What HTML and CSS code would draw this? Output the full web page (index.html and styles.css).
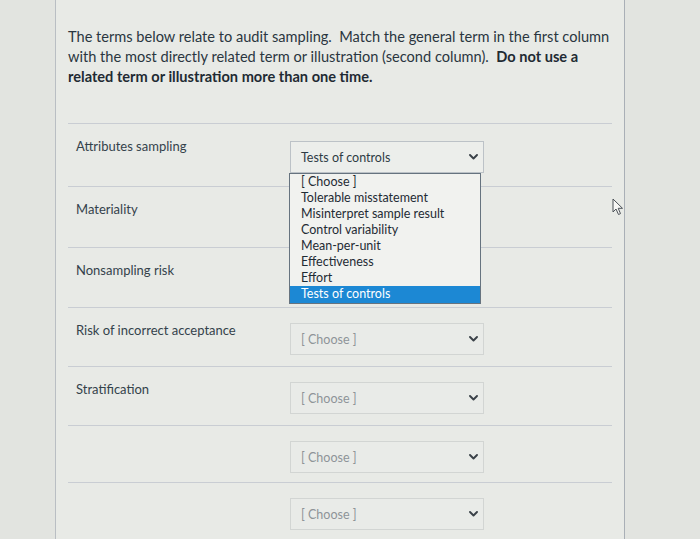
FILE: index.html
```html
<!DOCTYPE html>
<html>
<head>
<meta charset="utf-8">
<link rel="stylesheet" href="styles.css">
</head>
<body>
<div class="card">
  <p class="intro">The terms below relate to audit sampling.&nbsp; Match the general term in the first column with the most directly related term or illustration (second column).&nbsp; <b>Do not use a related term or illustration more than one time.</b></p>
  <div class="rows">
    <div class="row">
      <div class="label">Attributes sampling</div>
      <div class="field">
        <div class="select filled"><span>Tests of controls</span><svg class="chev" viewBox="0 0 9 6" width="9" height="6"><path d="M1 1 L4.5 4.5 L8 1" /></svg></div>
        <ul class="listbox">
          <li>[ Choose ]</li>
          <li>Tolerable misstatement</li>
          <li>Misinterpret sample result</li>
          <li>Control variability</li>
          <li>Mean-per-unit</li>
          <li>Effectiveness</li>
          <li>Effort</li>
          <li class="sel">Tests of controls</li>
        </ul>
      </div>
    </div>
    <div class="row">
      <div class="label">Materiality</div>
      <div class="field"><div class="select covered"><span>[ Choose ]</span><svg class="chev" viewBox="0 0 9 6" width="9" height="6"><path d="M1 1 L4.5 4.5 L8 1" /></svg></div></div>
    </div>
    <div class="row">
      <div class="label">Nonsampling risk</div>
      <div class="field"><div class="select covered"><span>[ Choose ]</span><svg class="chev" viewBox="0 0 9 6" width="9" height="6"><path d="M1 1 L4.5 4.5 L8 1" /></svg></div></div>
    </div>
    <div class="row">
      <div class="label">Risk of incorrect acceptance</div>
      <div class="field"><div class="select"><span>[ Choose ]</span><svg class="chev" viewBox="0 0 9 6" width="9" height="6"><path d="M1 1 L4.5 4.5 L8 1" /></svg></div></div>
    </div>
    <div class="row">
      <div class="label">Stratification</div>
      <div class="field"><div class="select"><span>[ Choose ]</span><svg class="chev" viewBox="0 0 9 6" width="9" height="6"><path d="M1 1 L4.5 4.5 L8 1" /></svg></div></div>
    </div>
    <div class="row">
      <div class="label"></div>
      <div class="field"><div class="select"><span>[ Choose ]</span><svg class="chev" viewBox="0 0 9 6" width="9" height="6"><path d="M1 1 L4.5 4.5 L8 1" /></svg></div></div>
    </div>
    <div class="row">
      <div class="label"></div>
      <div class="field"><div class="select"><span>[ Choose ]</span><svg class="chev" viewBox="0 0 9 6" width="9" height="6"><path d="M1 1 L4.5 4.5 L8 1" /></svg></div></div>
    </div>
  </div>
  <svg class="cursor" viewBox="0 0 12 18" width="12" height="18"><path d="M1 1 L1 14 L4 11 L6.5 16.5 L8.5 15.6 L6.2 10.3 L10.5 10.3 Z" /></svg>
</div>
</body>
</html>
```
FILE: styles.css
```css
html, body {
  margin: 0;
  padding: 0;
  background: #e2e4e0;
}
body {
  font-family: Lato, "Open Sans", sans-serif;
  color: #2b3942;
  width: 700px;
  height: 539px;
  overflow: hidden;
}
.card {
  position: relative;
  margin-left: 55px;
  width: 570px;
  height: 539px;
  box-sizing: border-box;
  border-left: 1px solid #b9bec3;
  border-right: 1px solid #a9afb6;
  background: #e8eae6;
  padding: 27px 12px 0 12px;
}
.intro {
  margin: 0;
  font-size: 14.6px;
  line-height: 20px;
  width: 548px;
  color: #2a3640;
}
.intro b {
  font-weight: 700;
  color: #1f2a33;
}
.rows {
  margin-top: 36px;
}
.row {
  display: flex;
  height: 58px;
  border-top: 1px solid #c9cdd3;
}
.row:nth-child(1) { height: 62px; }
.row:nth-child(2) { height: 60px; }
.row:nth-child(3) { height: 59px; }
.row:nth-child(6) { height: 56px; }
.label {
  width: 214px;
  padding: 14px 0 0 8px;
  font-size: 13px;
  line-height: 17px;
  color: #34424b;
}
.field {
  position: relative;
  padding-top: 15px;
}
.row:nth-child(1) .field {
  padding-top: 17px;
}
.select {
  width: 194px;
  height: 32px;
  box-sizing: border-box;
  border: 1px solid #d2d5d3;
  background: #e9ebe8;
  display: flex;
  align-items: center;
  justify-content: space-between;
  padding: 0 5px 0 10px;
  font-size: 12.5px;
  color: #8e9498;
}
.select.filled {
  border-color: #bcc2c7;
  background: #eceeeb;
  color: #2e3b44;
}
.select.covered {
  visibility: hidden;
}
.chev path {
  fill: none;
  stroke: #3a4148;
  stroke-width: 1.9;
  stroke-linecap: round;
  stroke-linejoin: round;
}
.listbox {
  position: absolute;
  z-index: 2;
  left: -1px;
  top: 49px;
  width: 190px;
  margin: 0;
  padding: 0;
  list-style: none;
  border: 1px solid #66737f;
  background: #f1f2ef;
  font-size: 12.5px;
  line-height: 16px;
  color: #1f2b34;
}
.listbox li {
  padding-left: 11px;
  white-space: nowrap;
}
.listbox li.sel {
  background: #1c88d4;
  color: #ffffff;
  height: 17px;
}
.cursor {
  position: absolute;
  left: 556px;
  top: 198px;
}
.cursor path {
  fill: #f7f7f5;
  stroke: #4b5157;
  stroke-width: 1;
  stroke-linejoin: round;
}
```
